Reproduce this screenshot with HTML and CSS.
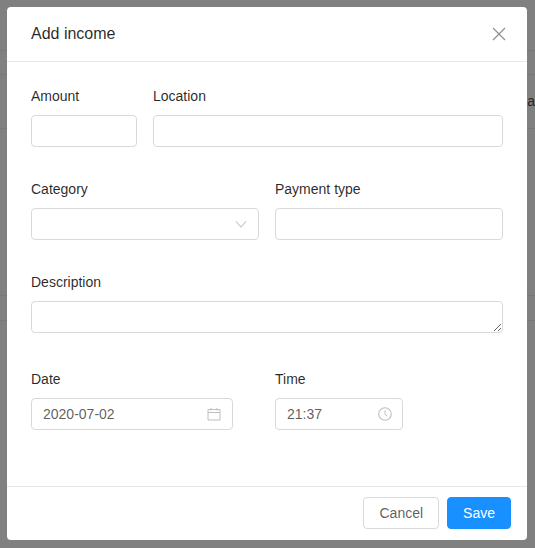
FILE: index.html
```html
<!DOCTYPE html>
<html lang="en">
<head>
  <meta charset="UTF-8">
  <title>Add income</title>
  <link rel="stylesheet" href="styles.css">
</head>
<body>
  <!-- page behind the dialog, only the table rows show -->
  <div class="page">
    <div class="row row-head"></div>
    <div class="row row-sub"></div>
    <div class="row row-a"><span class="cell-text">a</span></div>
    <div class="row row-b"></div>
    <div class="row row-c"></div>
  </div>

  <div class="modal">
    <div class="modal-header">
      <span class="modal-title">Add income</span>
      <svg class="close-icon" width="14" height="14" viewBox="0 0 14 14">
        <path d="M1 1l12 12M13 1L1 13" fill="none" stroke="#8c8c8c" stroke-width="1.1"/>
      </svg>
    </div>

    <div class="modal-body">
      <div class="form-row">
        <div class="field w-amount">
          <label>Amount</label>
          <input type="text" class="input">
        </div>
        <div class="field grow">
          <label>Location</label>
          <input type="text" class="input">
        </div>
      </div>

      <div class="form-row">
        <div class="field half">
          <label>Category</label>
          <div class="input input-box select">
            <svg width="12" height="12" viewBox="0 0 12 12">
              <path d="M1 3.500l5 5.500 5-5.500" fill="none" stroke="#bfbfbf" stroke-width="1.100"/>
            </svg>
          </div>
        </div>
        <div class="field half">
          <label>Payment type</label>
          <input type="text" class="input">
        </div>
      </div>

      <div class="form-row row-tall">
        <div class="field grow">
          <label>Description</label>
          <textarea class="input textarea"></textarea>
        </div>
      </div>

      <div class="form-row">
        <div class="field half">
          <label>Date</label>
          <div class="input input-box w-date">
            <span class="value">2020-07-02</span>
            <svg width="14" height="14" viewBox="0 0 14 14">
              <path d="M1 2.500h12v10.500H1zM1 5.500h12M4 1v2.500M10 1v2.500" fill="none" stroke="#bfbfbf" stroke-width="1"/>
            </svg>
          </div>
        </div>
        <div class="field half">
          <label>Time</label>
          <div class="input input-box w-time">
            <span class="value">21:37</span>
            <svg class="clock" width="14" height="14" viewBox="0 0 14 14">
              <circle cx="7" cy="7" r="6.300" fill="none" stroke="#bfbfbf" stroke-width="1.100"/>
              <path d="M7 3.500v3.800l2.200 1.600" fill="none" stroke="#bfbfbf" stroke-width="1"/>
            </svg>
          </div>
        </div>
      </div>
    </div>

    <div class="modal-footer">
      <button class="btn">Cancel</button>
      <button class="btn btn-primary">Save</button>
    </div>
  </div>
</body>
</html>
```

FILE: styles.css
```css
* {
  box-sizing: border-box;
}

html, body {
  height: 100%;
}

body {
  margin: 0;
  overflow: hidden;
  background: #808080;
  font-family: "Liberation Sans", Arial, sans-serif;
  font-size: 14px;
  color: rgba(0, 0, 0, 0.85);
}

/* Rows of the page under the overlay */
.row {
  border-bottom: 1px solid #787878;
}

.row-head {
  height: 51px;
}

.row-sub {
  height: 24px;
}

.row-a {
  height: 54px;
  padding-top: 18px;
  text-align: right;
  color: #262626;
  white-space: nowrap;
}

.row-b {
  height: 167px;
}

.row-c {
  height: 25px;
}

.modal {
  position: absolute;
  top: 7px;
  left: 7px;
  width: 520px;
  height: 533px;
  display: flex;
  flex-direction: column;
  background: #fff;
  border-radius: 4px;
}

.modal-header {
  height: 55px;
  padding: 0 24px;
  display: flex;
  align-items: center;
  justify-content: space-between;
  border-bottom: 1px solid #e8e8e8;
}

.modal-title {
  font-size: 16px;
  line-height: 22px;
}

.close-icon {
  margin-right: -3px;
}

.modal-body {
  flex: 1;
  padding: 23px 24px 0;
}

.form-row {
  display: flex;
  gap: 16px;
  height: 93px;
}

.row-tall {
  height: 97px;
}

.field {
  display: flex;
  flex-direction: column;
}

.field label {
  height: 22px;
  line-height: 22px;
  margin-bottom: 8px;
}

.w-amount {
  width: 106px;
}

.grow {
  flex: 1;
}

.half {
  width: 228px;
}

.input {
  height: 32px;
  width: 100%;
  margin: 0;
  padding: 4px 11px;
  border: 1px solid #d9d9d9;
  border-radius: 4px;
  background: #fff;
  font: inherit;
}

.textarea {
  display: block;
  resize: vertical;
}

.input-box {
  display: flex;
  align-items: center;
  justify-content: space-between;
}

.select {
  justify-content: flex-end;
}

.value {
  color: rgba(0, 0, 0, 0.65);
}

.w-date {
  width: 202px;
}

.w-time {
  width: 128px;
}

.clock {
  margin-right: -1px;
}

.modal-footer {
  height: 54px;
  padding: 10px 16px;
  display: flex;
  justify-content: flex-end;
  gap: 8px;
  border-top: 1px solid #e8e8e8;
}

.btn {
  height: 32px;
  padding: 0 15px;
  border: 1px solid #d9d9d9;
  border-radius: 4px;
  background: #fff;
  color: rgba(0, 0, 0, 0.65);
  font: inherit;
}

.btn-primary {
  border-color: #1890ff;
  background: #1890ff;
  color: #fff;
}
```
